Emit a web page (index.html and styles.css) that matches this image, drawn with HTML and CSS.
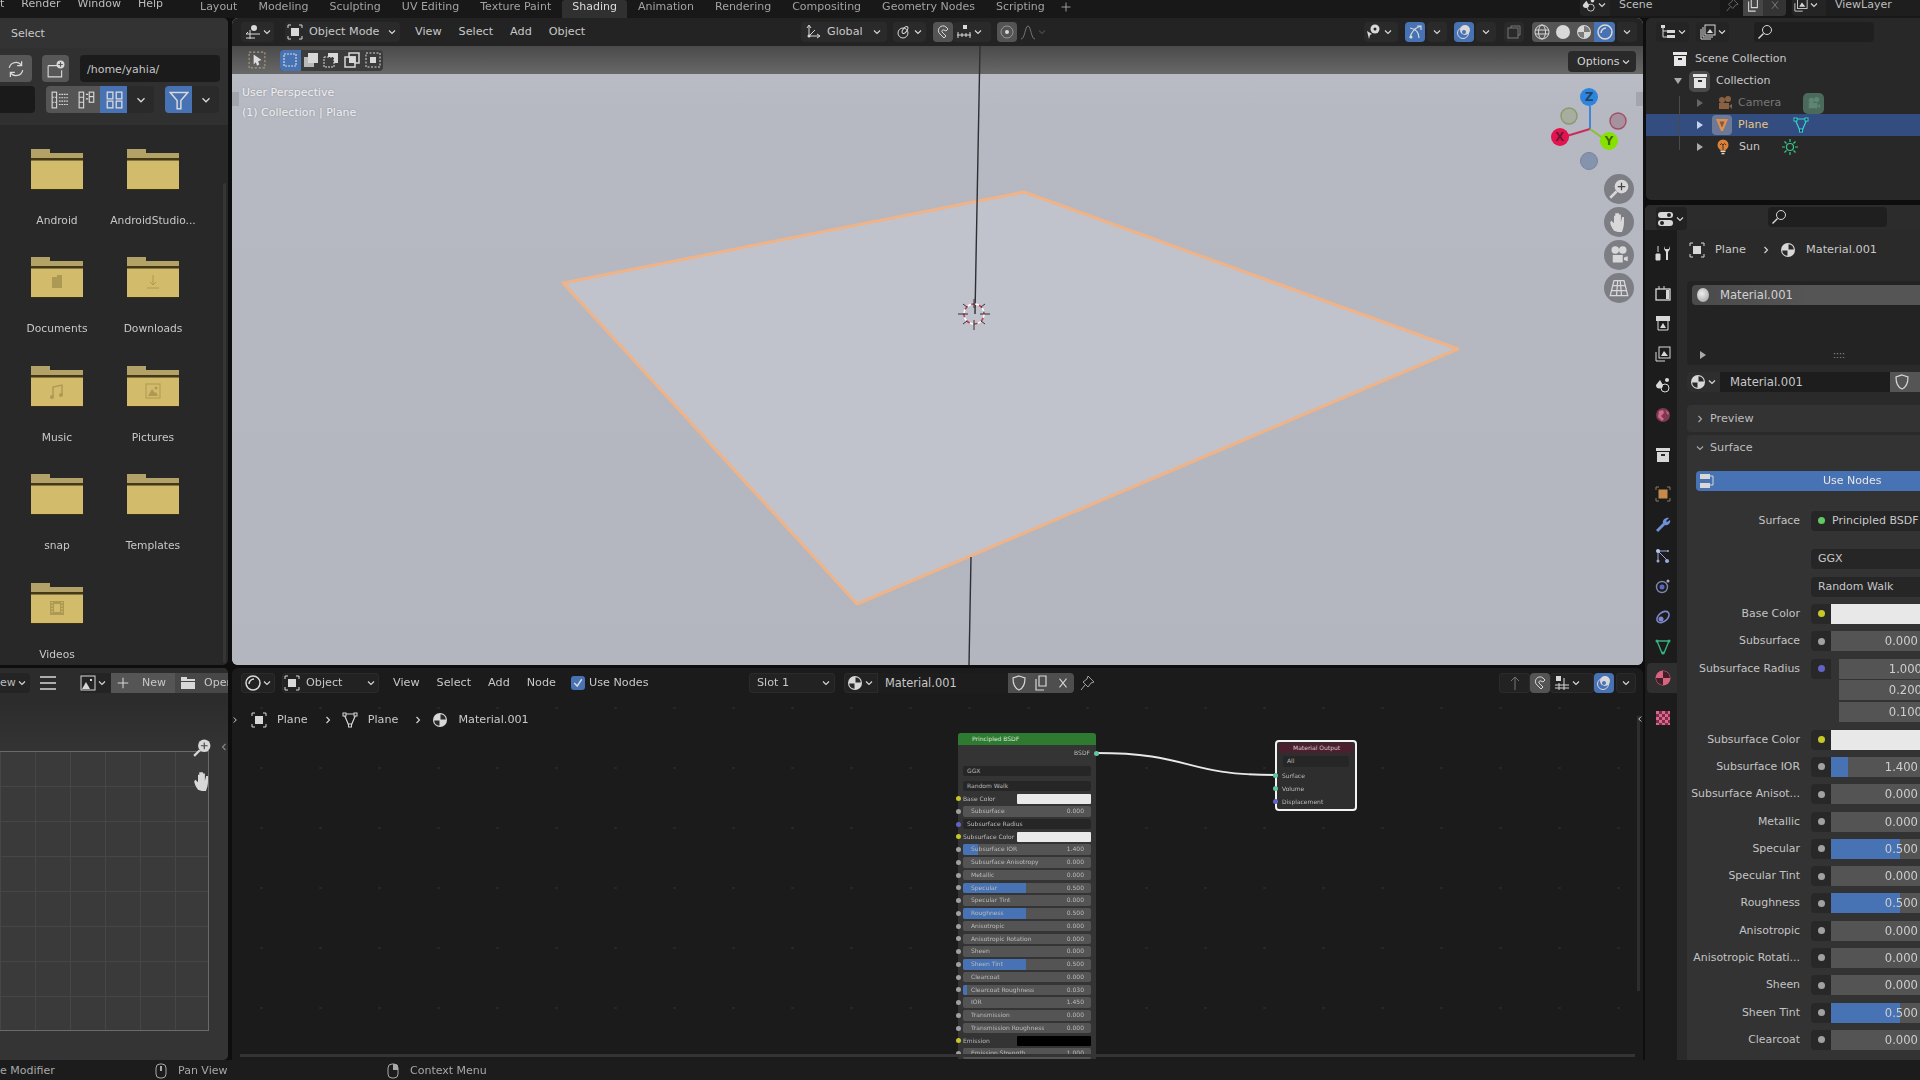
FILE: index.html
```html
<!DOCTYPE html>
<html lang="en">
<head>
<meta charset="utf-8">
<title>Blender - Shading</title>
<link rel="stylesheet" href="styles.css">
</head>
<body>
<svg class="defs" width="0" height="0">
  <symbol id="chk" viewBox="0 0 16 16"><path d="M3 8l4 4 6-9" fill="none" stroke="currentColor" stroke-width="2"/></symbol>
  <symbol id="chev" viewBox="0 0 16 16"><path d="M4 6l4 4 4-4" fill="none" stroke="currentColor" stroke-width="1.5"/></symbol>
  <symbol id="obj" viewBox="0 0 16 16"><path d="M4 1H1v3M12 1h3v3M4 15H1v-3M12 15h3v-3" fill="none" stroke="currentColor"/><rect x="4" y="4" width="8" height="8" fill="currentColor"/></symbol>
  <symbol id="ed3d" viewBox="0 0 16 16"><circle cx="9" cy="4" r="3" fill="currentColor"/><path d="M1 10h14M5 6v9M1 14h9M3 8l-2 2" fill="none" stroke="currentColor"/></symbol>
  <symbol id="axes" viewBox="0 0 16 16"><path d="M4 2v10h10M4 12l6-6M2 4l2-3 2 3M12 10l3 2-3 2" fill="none" stroke="currentColor"/><circle cx="4" cy="12" r="1.5" fill="currentColor"/></symbol>
  <symbol id="link" viewBox="0 0 16 16"><circle cx="7" cy="9" r="5" fill="none" stroke="currentColor"/><ellipse cx="9" cy="6" rx="2" ry="4" transform="rotate(35 9 6)" fill="none" stroke="currentColor"/></symbol>
  <symbol id="magnet" viewBox="0 0 16 16"><path d="M9 14l-4-4a4 4 0 0 1 6-7l2 2-2 2-2-1a1.500 1.500 0 0 0-2 2l4 4z" fill="none" stroke="currentColor"/></symbol>
  <symbol id="snap" viewBox="0 0 16 16"><rect x="7" y="1" width="4" height="4" fill="currentColor"/><path d="M1 11h14M2 8v6M6 9v4M10 9v4M14 8v6" fill="none" stroke="currentColor"/></symbol>
  <symbol id="grid" viewBox="0 0 16 16"><rect x="2" y="1" width="5" height="5" fill="currentColor"/><path d="M1 10h14M10 3v12M5 8v7M1 13h14" fill="none" stroke="currentColor"/></symbol>
  <symbol id="prop" viewBox="0 0 16 16"><circle cx="8" cy="8" r="6" fill="none" stroke="currentColor" opacity=".5"/><circle cx="8" cy="8" r="2" fill="currentColor"/></symbol>
  <symbol id="bell" viewBox="0 0 16 16"><path d="M1 15C5 15 5 2 8 2s3 13 7 13" fill="none" stroke="currentColor"/></symbol>
  <symbol id="eye" viewBox="0 0 16 16"><circle cx="9" cy="5" r="4.500" fill="currentColor"/><circle cx="9" cy="5" r="1.500" fill="#222"/><path d="M1 7l5 3-2 1-1 4z" fill="currentColor"/></symbol>
  <symbol id="gizmo" viewBox="0 0 16 16"><path d="M3 14c1-6 5-10 11-12M3 4c6 1 9 5 9 10M10 2h4v4" fill="none" stroke="currentColor" stroke-width="1.200"/><circle cx="4" cy="13" r="1.500" fill="currentColor"/></symbol>
  <symbol id="overlay" viewBox="0 0 16 16"><circle cx="7" cy="9" r="5.500" fill="none" stroke="currentColor"/><circle cx="9" cy="6" r="5" fill="currentColor"/><circle cx="8" cy="8" r="2" fill="#4772b3"/></symbol>
  <symbol id="xray" viewBox="0 0 16 16"><rect x="2" y="4" width="10" height="10" fill="none" stroke="currentColor"/><path d="M5 4V2h9v9h-2" fill="none" stroke="currentColor"/></symbol>
  <symbol id="wire" viewBox="0 0 16 16"><circle cx="8" cy="8" r="7" fill="none" stroke="currentColor"/><ellipse cx="8" cy="8" rx="3.500" ry="7" fill="none" stroke="currentColor"/><path d="M1 6h14M1 10h14" stroke="currentColor"/></symbol>
  <symbol id="solid" viewBox="0 0 16 16"><circle cx="8" cy="8" r="7" fill="currentColor"/></symbol>
  <symbol id="mat" viewBox="0 0 16 16"><circle cx="8" cy="8" r="7" fill="currentColor"/><path d="M8.500 7.500V2.200a5.800 5.800 0 0 1 5.300 5.300z" fill="#2a2a2a"/><path d="M7.500 8.500H2.200a5.800 5.800 0 0 0 5.300 5.300z" fill="#2a2a2a"/></symbol>
  <symbol id="matv" viewBox="0 0 16 16"><circle cx="8" cy="8" r="7" fill="#d6d6d6"/><path d="M8 2a6 6 0 0 1 6 6H8z" fill="#7a7a7a"/><path d="M2 8a6 6 0 0 0 6 6V8z" fill="#7a7a7a"/></symbol>
  <symbol id="rend" viewBox="0 0 16 16"><circle cx="8" cy="8" r="7" fill="none" stroke="currentColor" stroke-width="1.500"/><path d="M4 9a5 5 0 0 1 5-5" fill="none" stroke="currentColor" stroke-width="1.500"/></symbol>
  <symbol id="search" viewBox="0 0 16 16"><circle cx="10" cy="6" r="4.500" fill="none" stroke="currentColor"/><path d="M6.500 9.500L1.500 14.500" stroke="currentColor" stroke-width="1.500"/></symbol>
  <symbol id="tree" viewBox="0 0 16 16"><path d="M1 1h4v3H1zM7 6h8v3H7zM7 11h8v3H7z" fill="currentColor"/><path d="M3 4v9h4M3 7h4" fill="none" stroke="currentColor"/></symbol>
  <symbol id="stack" viewBox="0 0 16 16"><path d="M1 5v10h10M3 3v10h10" fill="none" stroke="currentColor"/><rect x="5" y="1" width="10" height="10" fill="none" stroke="currentColor"/><path d="M7 9l3-4 3 4z" fill="currentColor"/></symbol>
  <symbol id="box" viewBox="0 0 16 16"><path d="M1 1h14v3H1z" fill="currentColor"/><path d="M2 5h12v10H2z" fill="currentColor"/><rect x="6" y="7" width="4" height="2" fill="#2b2b2b"/></symbol>
  <symbol id="cam" viewBox="0 0 16 16"><circle cx="5" cy="5" r="3" fill="currentColor"/><circle cx="11" cy="4" r="3" fill="currentColor"/><rect x="2" y="8" width="10" height="6" fill="currentColor"/><path d="M12 11l3-2v5z" fill="currentColor"/></symbol>
  <symbol id="mesh" viewBox="0 0 16 16"><path d="M2 2h12L9 14H7z" fill="none" stroke="currentColor" stroke-width="1.200"/><rect x="1" y="1" width="3" height="3" fill="#222" stroke="currentColor"/><rect x="12" y="1" width="3" height="3" fill="#222" stroke="currentColor"/><rect x="6.500" y="12" width="3" height="3" fill="#222" stroke="currentColor"/></symbol>
  <symbol id="triorange" viewBox="0 0 16 16"><path d="M2 2h12L9 14H7z" fill="#e08f4f"/><path d="M5.500 4.500h5L8.300 10h-.6z" fill="#7a5a48"/></symbol>
  <symbol id="bulb" viewBox="0 0 16 16"><circle cx="8" cy="6" r="5.500" fill="currentColor"/><rect x="5.500" y="11.500" width="5" height="1.500" fill="#e5d3c0"/><rect x="6.500" y="13.800" width="3" height="1.500" fill="#e5d3c0"/><path d="M5 6l1.500-1.500L8 6l1.500-1.500L11 6M8 6v5" fill="none" stroke="#4a2f1a"/></symbol>
  <symbol id="sun" viewBox="0 0 16 16"><circle cx="8" cy="8" r="3.500" fill="none" stroke="currentColor" stroke-width="1.200"/><path d="M8 0v3M8 13v3M0 8h3M13 8h3M2.500 2.500l2 2M11.500 11.500l2 2M2.500 13.500l2-2M11.500 4.500l2-2" stroke="currentColor" stroke-width="1.200"/></symbol>
  <symbol id="toggles" viewBox="0 0 16 16"><rect x="0" y="1" width="15" height="6" rx="3" fill="currentColor"/><circle cx="11" cy="4" r="2" fill="#222"/><rect x="0" y="9" width="15" height="6" rx="3" fill="currentColor"/><circle cx="4" cy="12" r="2" fill="#222"/></symbol>
  <symbol id="tool" viewBox="0 0 16 16"><path d="M3 1v6M1 9h4v6H1z" fill="currentColor" stroke="currentColor"/><path d="M9 1v3l2 3v8h2V7l2-3V1l-1 3h-4z" fill="currentColor"/></symbol>
  <symbol id="render" viewBox="0 0 16 16"><rect x="1" y="4" width="14" height="11" fill="none" stroke="currentColor" stroke-width="1.300"/><path d="M4 1v3M9 1v3M12 6v2M12 10v2" stroke="currentColor"/><rect x="11" y="5" width="3" height="9" fill="currentColor"/></symbol>
  <symbol id="output" viewBox="0 0 16 16"><rect x="1" y="1" width="14" height="5" fill="currentColor"/><path d="M3 6v9h10V6" fill="none" stroke="currentColor"/><path d="M5 13l3-5 3 5z" fill="currentColor"/></symbol>
  <symbol id="vlayer" viewBox="0 0 16 16"><path d="M1 6v9h9" fill="none" stroke="currentColor"/><rect x="4" y="1" width="11" height="11" fill="none" stroke="currentColor"/><path d="M6 10l3-5 4 5z" fill="currentColor"/></symbol>
  <symbol id="scene" viewBox="0 0 16 16"><path d="M5 3l3 5a3.500 3.500 0 0 1-7 0z" fill="currentColor"/><circle cx="12" cy="3" r="2" fill="currentColor"/><circle cx="10" cy="11" r="4" fill="none" stroke="currentColor"/></symbol>
  <symbol id="world" viewBox="0 0 16 16"><circle cx="8" cy="8" r="7" fill="#7b3a50"/><path d="M4 4l4-1 1 3-3 3 3 3-2 2-4-4z" fill="#d06a8a"/><path d="M10 3l4 3-1 2z" fill="#d06a8a"/></symbol>
  <symbol id="objo" viewBox="0 0 16 16"><path d="M4 1H1v3M12 1h3v3M4 15H1v-3M12 15h3v-3" fill="none" stroke="#8a7a60"/><rect x="3.500" y="3.500" width="9" height="9" fill="#c48a4c"/></symbol>
  <symbol id="wrench" viewBox="0 0 16 16"><path d="M14 1l-3 3 1 1 3-2c1 3-2 6-5 5l-7 7-2-2 7-7C7 3 11 0 14 1z" fill="#6f8fd6"/></symbol>
  <symbol id="part" viewBox="0 0 16 16"><path d="M3 3l4 4M3 3v10M7 7l7 7M3 3h10" stroke="#9aa7d8" stroke-width="1"/><circle cx="3" cy="3" r="2" fill="#bac6f0"/><circle cx="3" cy="13" r="1.500" fill="#9aa7d8"/><circle cx="12" cy="13" r="2" fill="#9aa7d8"/><circle cx="13" cy="3" r="1" fill="#9aa7d8"/></symbol>
  <symbol id="phys" viewBox="0 0 16 16"><circle cx="7" cy="9" r="5.500" fill="none" stroke="#7d86ad" stroke-width="1.400"/><circle cx="7" cy="9" r="2.500" fill="#5a68c4"/><circle cx="13" cy="3" r="1.500" fill="#aab"/></symbol>
  <symbol id="cons" viewBox="0 0 16 16"><ellipse cx="8" cy="8" rx="7" ry="4.500" transform="rotate(-40 8 8)" fill="none" stroke="#7d86c9" stroke-width="1.600"/><circle cx="6" cy="10" r="2.500" fill="#7d86c9"/></symbol>
  <symbol id="datag" viewBox="0 0 16 16"><path d="M2 2h12L9 14H7z" fill="none" stroke="#35b37e" stroke-width="1.400"/><circle cx="2" cy="2" r="1.500" fill="#35b37e"/><circle cx="14" cy="2" r="1.500" fill="#35b37e"/><circle cx="8" cy="14" r="1.500" fill="#35b37e"/></symbol>
  <symbol id="matp" viewBox="0 0 16 16"><circle cx="8" cy="8" r="7.500" fill="#d8647f"/><path d="M8 1a7 7 0 0 1 7 7H8zM8 8v7a7 7 0 0 1-7-7z" fill="#431f2a"/></symbol>
  <symbol id="tex" viewBox="0 0 16 16"><rect x="1" y="1" width="14" height="14" fill="#802b48"/><path d="M1 1h3v3H1zM7 1h3v3H7zM13 1h2v3h-2zM4 4h3v3H4zM10 4h3v3h-3zM1 7h3v3H1zM7 7h3v3H7zM13 7h2v3h-2zM4 10h3v3H4zM10 10h3v3h-3zM1 13h3v2H1zM7 13h3v2H7zM13 13h2v2h-2z" fill="#d7698b"/></symbol>
  <symbol id="shield" viewBox="0 0 16 16"><path d="M8 1l6 2c0 6-1 10-6 12C3 13 2 9 2 3z" fill="none" stroke="currentColor" stroke-width="1.200"/></symbol>
  <symbol id="copy" viewBox="0 0 16 16"><path d="M3 4v11h8M6 1h7v10H6z" fill="none" stroke="currentColor" stroke-width="1.200"/></symbol>
  <symbol id="x" viewBox="0 0 16 16"><path d="M4 3l8 10M12 3L4 13" stroke="currentColor" stroke-width="1.200"/></symbol>
  <symbol id="pin" viewBox="0 0 16 16"><path d="M9 1l6 6-3 1-3 4-5-5 4-3zM6 10l-4 5" fill="none" stroke="currentColor"/></symbol>
  <symbol id="burger" viewBox="0 0 16 16"><path d="M0 2h16M0 8h16M0 14h16" stroke="currentColor" stroke-width="1.600"/></symbol>
  <symbol id="img" viewBox="0 0 16 16"><rect x="1" y="1" width="14" height="14" fill="none" stroke="currentColor"/><path d="M2 14l4-7 4 7z" fill="currentColor"/><rect x="10" y="4" width="2" height="2" fill="currentColor"/></symbol>
  <symbol id="plus" viewBox="0 0 16 16"><path d="M8 2v12M2 8h12" stroke="currentColor" stroke-width="1.200"/></symbol>
  <symbol id="folder" viewBox="0 0 16 16"><path d="M1 2h6v2h8v2H1z" fill="currentColor"/><path d="M1 7h14v7H1z" fill="currentColor"/></symbol>
  <symbol id="zoomin" viewBox="0 0 16 16"><circle cx="10" cy="6" r="5.500" fill="currentColor"/><path d="M10 3v6M7 6h6" stroke="#444"/><path d="M6 10l-5 5" stroke="currentColor" stroke-width="2"/></symbol>
  <symbol id="hand" viewBox="0 0 16 16"><path d="M4 15C2 12 1 10 1 8l1-1 2 2V3h1v4-6h1.500v6V1H8v6-5h1.500v6l1-4H12v4c0 4-1 6-2 9z" fill="currentColor"/></symbol>
  <symbol id="cam2" viewBox="0 0 16 16"><circle cx="5" cy="4" r="3" fill="currentColor"/><circle cx="11" cy="4" r="3" fill="currentColor"/><rect x="3" y="8" width="8" height="6" fill="currentColor"/><path d="M12 10l3-1v4l-3-1z" fill="currentColor"/></symbol>
  <symbol id="persp" viewBox="0 0 16 16"><path d="M4 2h8l3 12H1zM2.500 6h11M1.500 10h13M7 2l-1 12M9 2l1 12" fill="none" stroke="currentColor"/></symbol>
  <symbol id="mouse1" viewBox="0 0 16 16"><rect x="3" y="1" width="10" height="14" rx="4" fill="none" stroke="currentColor"/><rect x="7" y="3" width="2" height="5" fill="currentColor"/></symbol>
  <symbol id="mouse2" viewBox="0 0 16 16"><rect x="3" y="1" width="10" height="14" rx="4" fill="none" stroke="currentColor"/><path d="M8 1h2a3 3 0 0 1 3 3v3H8z" fill="currentColor"/></symbol>
  <symbol id="refresh" viewBox="0 0 16 16"><path d="M2 7a6 6 0 0 1 11-2M14 9a6 6 0 0 1-11 2M13 1v4H9M3 15v-4h4" fill="none" stroke="currentColor" stroke-width="1.100"/></symbol>
  <symbol id="newdir" viewBox="0 0 16 16"><path d="M1 5h8M1 5v10h12V9" fill="none" stroke="currentColor"/><circle cx="12" cy="4" r="3.500" fill="currentColor"/><path d="M12 2v4M10 4h4" stroke="#555"/></symbol>
  <symbol id="ls1" viewBox="0 0 16 16"><rect x="1" y="1" width="4" height="14" fill="none" stroke="currentColor"/><path d="M1 5.500h4M1 10h4M7 3h8M7 6h8M7 9h8M7 12h8" stroke="currentColor" stroke-dasharray="1.500 .7"/></symbol>
  <symbol id="ls2" viewBox="0 0 16 16"><rect x="1" y="1" width="4" height="14" fill="none" stroke="currentColor"/><rect x="10" y="1" width="4" height="9" fill="none" stroke="currentColor"/><path d="M1 5.500h4M1 10h4M10 5h4M7 3h2M7 7h2" stroke="currentColor"/></symbol>
  <symbol id="ls3" viewBox="0 0 16 16"><rect x="2" y="1" width="5" height="6" fill="none" stroke="currentColor" stroke-width="1.200"/><rect x="10" y="1" width="5" height="6" fill="none" stroke="currentColor" stroke-width="1.200"/><rect x="2" y="9" width="5" height="6" fill="none" stroke="currentColor" stroke-width="1.200"/><rect x="10" y="9" width="5" height="6" fill="none" stroke="currentColor" stroke-width="1.200"/></symbol>
  <symbol id="filter" viewBox="0 0 16 16"><path d="M1 2h14L9.500 8.500V15h-3V8.500z" fill="none" stroke="currentColor" stroke-width="1.200"/></symbol>
  <symbol id="cursor" viewBox="0 0 16 16"><rect x="1" y="1" width="14" height="14" fill="none" stroke="#a89878" stroke-dasharray="2 1.500"/><path d="M5 3l7 5-3 1 1 3-2 1-1-3-2 2z" fill="#ddd"/></symbol>
  <symbol id="sel1" viewBox="0 0 16 16"><rect x="2" y="2" width="12" height="12" fill="none" stroke="currentColor" stroke-width="1.200" stroke-dasharray="2 1"/></symbol>
  <symbol id="sel2" viewBox="0 0 16 16"><rect x="5" y="1" width="10" height="10" fill="currentColor"/><rect x="1" y="5" width="10" height="10" fill="currentColor" opacity=".8"/></symbol>
  <symbol id="sel3" viewBox="0 0 16 16"><path d="M5 5V1h10v10h-4V5z" fill="currentColor"/><rect x="1" y="5" width="10" height="10" fill="none" stroke="currentColor" stroke-dasharray="2 1"/></symbol>
  <symbol id="sel4" viewBox="0 0 16 16"><path d="M5 5V1h10v10h-4V5z" fill="none" stroke="currentColor" stroke-width="1.500"/><path d="M1 5h10v10H1z" fill="none" stroke="currentColor" stroke-width="1.500"/><rect x="5" y="5" width="6" height="6" fill="currentColor"/></symbol>
  <symbol id="sel5" viewBox="0 0 16 16"><rect x="1" y="1" width="14" height="14" fill="none" stroke="currentColor" stroke-dasharray="2 1.500"/><rect x="5" y="5" width="6" height="6" fill="currentColor"/></symbol>
  <symbol id="nodes" viewBox="0 0 16 16"><path d="M1 1h10v5H1zM1 10h10v5H1z" fill="currentColor"/><path d="M11 3h3v9h-3" fill="none" stroke="currentColor"/></symbol>
  <symbol id="up" viewBox="0 0 16 16"><path d="M8 15V2M4 6l4-4 4 4" fill="none" stroke="currentColor"/></symbol>
  <symbol id="fmusic" viewBox="0 0 16 16"><path d="M4 14V4l9-2v10" fill="none" stroke="currentColor" stroke-width="1.400"/><circle cx="3" cy="14" r="2" fill="currentColor"/><circle cx="12" cy="12" r="2" fill="currentColor"/></symbol>
  <symbol id="fpic" viewBox="0 0 16 16"><rect x="1" y="1" width="14" height="14" fill="none" stroke="currentColor"/><path d="M3 13l4-7 3 4 1-1 2 4z" fill="currentColor"/><circle cx="11" cy="5" r="1.500" fill="currentColor"/></symbol>
  <symbol id="fdoc" viewBox="0 0 16 16"><path d="M3 3h5v11H3zM8 1h5v13H8z" fill="currentColor"/></symbol>
  <symbol id="fdown" viewBox="0 0 16 16"><path d="M8 1v10M5 8l3 3 3-3M2 14h12" fill="none" stroke="currentColor"/></symbol>
  <symbol id="fvid" viewBox="0 0 16 16"><path d="M1 1h14v14H1z" fill="currentColor"/><path d="M3 2v12M13 2v12" stroke="#d2bb6b" stroke-dasharray="1.500 1.500" stroke-width="1.500"/><rect x="5" y="4" width="6" height="8" fill="#d2bb6b"/></symbol>
  <symbol id="dir" viewBox="0 0 52 41" preserveAspectRatio="none"><path d="M0 0h19v5H0z" fill="#b3a268"/><path d="M0 4h52v6H0z" fill="#b3a268"/><path d="M0 9h52v2.500H0z" fill="#453814"/><path d="M0 11.500h52V40H0z" fill="#d2bb6b"/><path d="M0 40h52v1H0z" fill="#3b3112"/></symbol>
</svg>

<div class="app">
  <header class="topbar">
    <nav class="topmenu"><span>t</span><span>Render</span><span>Window</span><span>Help</span></nav>
    <nav class="tabs">
      <span>Layout</span><span>Modeling</span><span>Sculpting</span><span>UV Editing</span><span>Texture Paint</span><span class="on">Shading</span><span>Animation</span><span>Rendering</span><span>Compositing</span><span>Geometry Nodes</span><span>Scripting</span>
      <svg class="ic i12 tabplus"><use href="#plus"/></svg>
    </nav>
    <div class="scene-group">
      <span class="sg-btn"><svg class="ic i14"><use href="#scene"/></svg><svg class="ic i12"><use href="#chev"/></svg></span>
      <span class="sg-name">Scene</span>
      <svg class="ic i14 dim"><use href="#pin"/></svg>
      <span class="sg-copy"><svg class="ic i14"><use href="#copy"/></svg></span>
      <span class="sg-x"><svg class="ic i12 dim"><use href="#x"/></svg></span>
      <span class="sg-btn sg-vl"><svg class="ic i14"><use href="#vlayer"/></svg><svg class="ic i12"><use href="#chev"/></svg></span>
      <span class="sg-name sg-vlname">ViewLayer</span>
    </div>
  </header>

  <main class="workspace">
    <aside class="col-left">
      <section class="filebrowser">
        <div class="fb-head">Select</div>
        <div class="fb-tools">
          <div class="fb-row">
            <span class="fb-btn fb-ref"><svg class="ic i18"><use href="#refresh"/></svg></span>
            <span class="fb-btn fb-new"><svg class="ic i18"><use href="#newdir"/></svg></span>
            <span class="fb-path">/home/yahia/</span>
          </div>
          <div class="fb-row">
            <span class="fb-input"></span>
            <span class="fb-mode"><svg class="ic i18"><use href="#ls1"/></svg></span>
            <span class="fb-mode"><svg class="ic i18"><use href="#ls2"/></svg></span>
            <span class="fb-mode blue"><svg class="ic i18"><use href="#ls3"/></svg></span>
            <span class="fb-chev"><svg class="ic i14"><use href="#chev"/></svg></span>
            <span class="fb-mode blue fb-filter"><svg class="ic i20"><use href="#filter"/></svg></span>
            <span class="fb-chev"><svg class="ic i14"><use href="#chev"/></svg></span>
          </div>
        </div>
        <div class="fb-grid">
          <div class="dirc"><div class="dirico"><svg class="dirsvg"><use href="#dir"/></svg></div><span>Android</span></div>
          <div class="dirc"><div class="dirico"><svg class="dirsvg"><use href="#dir"/></svg></div><span>AndroidStudio...</span></div>
          <div class="dirc"><div class="dirico"><svg class="dirsvg"><use href="#dir"/></svg><svg class="dirin"><use href="#fdoc"/></svg></div><span>Documents</span></div>
          <div class="dirc"><div class="dirico"><svg class="dirsvg"><use href="#dir"/></svg><svg class="dirin"><use href="#fdown"/></svg></div><span>Downloads</span></div>
          <div class="dirc"><div class="dirico"><svg class="dirsvg"><use href="#dir"/></svg><svg class="dirin"><use href="#fmusic"/></svg></div><span>Music</span></div>
          <div class="dirc"><div class="dirico"><svg class="dirsvg"><use href="#dir"/></svg><svg class="dirin"><use href="#fpic"/></svg></div><span>Pictures</span></div>
          <div class="dirc"><div class="dirico"><svg class="dirsvg"><use href="#dir"/></svg></div><span>snap</span></div>
          <div class="dirc"><div class="dirico"><svg class="dirsvg"><use href="#dir"/></svg></div><span>Templates</span></div>
          <div class="dirc"><div class="dirico"><svg class="dirsvg"><use href="#dir"/></svg><svg class="dirin"><use href="#fvid"/></svg></div><span>Videos</span></div>
        </div>
        <i class="fb-scroll"></i>
      </section>
      <section class="imgeditor">
        <div class="ie-head">
          <span class="ie-view">ew<svg class="ic i12"><use href="#chev"/></svg></span>
          <svg class="ic i16 ie-burger"><use href="#burger"/></svg>
          <span class="ie-type"><svg class="ic i16"><use href="#img"/></svg><svg class="ic i12"><use href="#chev"/></svg></span>
          <span class="ie-new"><svg class="ic i14"><use href="#plus"/></svg><span>New</span></span>
          <span class="ie-open"><svg class="ic i16"><use href="#folder"/></svg><span>Open</span></span>
        </div>
        <div class="ie-body">
          <div class="ie-canvas"></div>
          <div class="ie-nav">
            <svg class="ic i18"><use href="#zoomin"/></svg>
            <svg class="ic i20"><use href="#hand"/></svg>
          </div>
          <svg class="ic i12 ie-arrow"><use href="#chev"/></svg>
        </div>
      </section>
    </aside>

    <div class="col-mid">
      <section class="viewport">
        <div class="hdr">
          <span class="w w-ed"><svg class="ic i16"><use href="#ed3d"/></svg><svg class="ic i12"><use href="#chev"/></svg></span>
          <span class="w w-mode"><svg class="ic i16"><use href="#obj"/></svg><span class="w-lab">Object Mode</span><svg class="ic i12 w-end"><use href="#chev"/></svg></span>
          <nav class="menus m1"><span>View</span><span>Select</span><span>Add</span><span>Object</span></nav>
          <span class="w w-global"><svg class="ic i16"><use href="#axes"/></svg><span class="w-lab">Global</span><svg class="ic i12 w-end"><use href="#chev"/></svg></span>
          <span class="w w-link"><svg class="ic i16"><use href="#link"/></svg><svg class="ic i12"><use href="#chev"/></svg></span>
          <span class="w w-ico grey"><svg class="ic i16"><use href="#magnet"/></svg></span>
          <span class="w w-snap"><svg class="ic i16"><use href="#snap"/></svg><svg class="ic i12"><use href="#chev"/></svg></span>
          <span class="w w-ico grey w-prop"><svg class="ic i16"><use href="#prop"/></svg></span>
          <span class="w-fall"><svg class="ic i16 dim"><use href="#bell"/></svg><svg class="ic i12 dim2"><use href="#chev"/></svg></span>
          <div class="hdr-right">
            <span class="w w-vis"><svg class="ic i16"><use href="#eye"/></svg><svg class="ic i12"><use href="#chev"/></svg></span>
            <span class="w w-ico blue"><svg class="ic i16"><use href="#gizmo"/></svg></span>
            <span class="w w-ch"><svg class="ic i12"><use href="#chev"/></svg></span>
            <span class="w w-ico blue"><svg class="ic i16"><use href="#overlay"/></svg></span>
            <span class="w w-ch"><svg class="ic i12"><use href="#chev"/></svg></span>
            <span class="w w-ico dimw"><svg class="ic i16 dim"><use href="#xray"/></svg></span>
            <span class="shade">
              <span class="w-ico"><svg class="ic i16"><use href="#wire"/></svg></span>
              <span class="w-ico"><svg class="ic i16"><use href="#solid"/></svg></span>
              <span class="w-ico"><svg class="ic i16"><use href="#matv"/></svg></span>
              <span class="w-ico blue"><svg class="ic i16"><use href="#rend"/></svg></span>
            </span>
            <span class="w w-ch"><svg class="ic i12"><use href="#chev"/></svg></span>
          </div>
        </div>
        <div class="toolhdr">
          <span class="th-cur"><svg class="ic i18"><use href="#cursor"/></svg></span>
          <span class="th-sel">
            <span class="on"><svg class="ic i16"><use href="#sel1"/></svg></span>
            <span><svg class="ic i16"><use href="#sel2"/></svg></span>
            <span><svg class="ic i16"><use href="#sel3"/></svg></span>
            <span><svg class="ic i16"><use href="#sel4"/></svg></span>
            <span><svg class="ic i16"><use href="#sel5"/></svg></span>
          </span>
          <span class="th-opt">Options<svg class="ic i12"><use href="#chev"/></svg></span>
        </div>
        <div class="vp-body">
          <p class="vp-text">User Perspective<br>(1) Collection | Plane</p>
          <div class="vp-nav">
            <span><svg class="ic i20"><use href="#zoomin"/></svg></span>
            <span><svg class="ic i20"><use href="#hand"/></svg></span>
            <span><svg class="ic i20"><use href="#cam2"/></svg></span>
            <span><svg class="ic i20"><use href="#persp"/></svg></span>
          </div>
          <i class="vp-tab vp-tab-l"></i><i class="vp-tab vp-tab-r"></i>
        </div>
        <svg class="vp-scene" viewBox="0 0 1411 647">
          <polygon points="331,265 792,174 1226,331 625,586" fill="#c0c3cc" stroke="#efb387" stroke-width="3" stroke-linejoin="round"/>
          <path d="M748 28L743 296" stroke="#2d2f33" stroke-width="1.400"/>
          <path d="M739 539L737 647" stroke="#2d2f33" stroke-width="1.400"/>
          <g fill="none">
            <circle cx="742" cy="296" r="10" stroke="#fff" stroke-width="1.600" stroke-dasharray="4 4"/>
            <circle cx="742" cy="296" r="10" stroke="#c0405a" stroke-width="1.600" stroke-dasharray="4 4" stroke-dashoffset="4"/>
            <path d="M742 281v9M742 302v10M726 296h10M748 296h10M731 286l4 3M749 303l4 3M731 306l4-3M749 289l4-3" stroke="#333" stroke-width="1"/>
          </g>
          <g>
            <path d="M1358 111V88" stroke="#3f86d8" stroke-width="2"/>
            <path d="M1358 111l-30 9" stroke="#cc2a5e" stroke-width="2"/>
            <path d="M1358 111l17 12" stroke="#89c22d" stroke-width="2"/>
            <circle cx="1337" cy="98" r="8" fill="#a7ae9f" stroke="#879a6b" stroke-width="1.400"/>
            <circle cx="1386" cy="103" r="8" fill="#a6929e" stroke="#a24e68" stroke-width="1.400"/>
            <circle cx="1357" cy="143" r="8.500" fill="#8593ac" stroke="#74859f" stroke-width="1"/>
            <circle cx="1357" cy="79" r="9" fill="#2e85de"/>
            <circle cx="1328" cy="119" r="9" fill="#e3134f"/>
            <circle cx="1377" cy="123" r="9" fill="#84e100"/>
            <text class="giz" x="1357" y="83">Z</text>
            <text class="giz" x="1328" y="123">X</text>
            <text class="giz" x="1377" y="127">Y</text>
          </g>
        </svg>
      </section>

      <section class="nodeeditor">
        <div class="hdr nhdr">
          <span class="w w-ed2"><svg class="ic i16"><use href="#rend"/></svg><svg class="ic i12"><use href="#chev"/></svg></span>
          <span class="w w-objm"><svg class="ic i16"><use href="#obj"/></svg><span class="w-lab">Object</span><svg class="ic i12 w-end"><use href="#chev"/></svg></span>
          <nav class="menus m2"><span>View</span><span>Select</span><span>Add</span><span>Node</span></nav>
          <span class="chk"><svg class="ic i12"><use href="#chk"/></svg></span>
          <span class="chk-lab">Use Nodes</span>
          <span class="w w-slot"><span>Slot 1</span><svg class="ic i12 w-end"><use href="#chev"/></svg></span>
          <span class="w w-mic"><svg class="ic i16"><use href="#mat"/></svg><svg class="ic i12"><use href="#chev"/></svg></span>
          <span class="w-mname">Material.001</span>
          <span class="w-act"><svg class="ic i16"><use href="#shield"/></svg></span>
          <span class="w-act"><svg class="ic i16"><use href="#copy"/></svg></span>
          <span class="w-act w-actx"><svg class="ic i14"><use href="#x"/></svg></span>
          <svg class="ic i16 nh-pin"><use href="#pin"/></svg>
          <div class="hdr-right nh-right">
            <span class="w w-ico nh-up"><svg class="ic i16 dim"><use href="#up"/></svg></span>
            <span class="w w-ico grey"><svg class="ic i16"><use href="#magnet"/></svg></span>
            <span class="w w-snap2"><svg class="ic i16"><use href="#grid"/></svg><svg class="ic i12"><use href="#chev"/></svg></span>
            <span class="w w-ico blue"><svg class="ic i16"><use href="#overlay"/></svg></span>
            <span class="w w-ch"><svg class="ic i12"><use href="#chev"/></svg></span>
          </div>
        </div>
        <div class="crumb">
          <svg class="ic i10 c-first"><use href="#chev"/></svg>
          <svg class="ic i16"><use href="#obj"/></svg><span class="c-txt">Plane</span>
          <svg class="ic i12 c-sep"><use href="#chev"/></svg>
          <svg class="ic i16"><use href="#mesh"/></svg><span class="c-txt">Plane</span>
          <svg class="ic i12 c-sep"><use href="#chev"/></svg>
          <svg class="ic i16"><use href="#mat"/></svg><span class="c-txt">Material.001</span>
        </div>

        <svg class="wire-svg" viewBox="0 0 1411 392"><path d="M864 85C960 85 950 107 1043 107" fill="none" stroke="#e8e8e8" stroke-width="1.800"/></svg>

        <article class="node bsdf">
          <div class="n-title">Principled BSDF</div>
          <div class="n-out">BSDF<i class="sk g out"></i></div>
          <div class="n-dd">GGX</div>
          <div class="n-dd">Random Walk</div>
          <div class="nr"><i class="sk y"></i><span class="n-cl">Base Color</span><b class="sw"></b></div>
          <div class="nr"><i class="sk"></i><span class="nf"><span>Subsurface</span><span>0.000</span></span></div>
          <div class="nr"><i class="sk p"></i><span class="nf dark"><span>Subsurface Radius</span></span></div>
          <div class="nr"><i class="sk y"></i><span class="n-cl">Subsurface Color</span><b class="sw"></b></div>
          <div class="nr"><i class="sk"></i><span class="nf"><u style="width:12%"></u><span>Subsurface IOR</span><span>1.400</span></span></div>
          <div class="nr"><i class="sk"></i><span class="nf"><span>Subsurface Anisotropy</span><span>0.000</span></span></div>
          <div class="nr"><i class="sk"></i><span class="nf"><span>Metallic</span><span>0.000</span></span></div>
          <div class="nr"><i class="sk"></i><span class="nf"><u style="width:49%"></u><span>Specular</span><span>0.500</span></span></div>
          <div class="nr"><i class="sk"></i><span class="nf"><span>Specular Tint</span><span>0.000</span></span></div>
          <div class="nr"><i class="sk"></i><span class="nf"><u style="width:49%"></u><span>Roughness</span><span>0.500</span></span></div>
          <div class="nr"><i class="sk"></i><span class="nf"><span>Anisotropic</span><span>0.000</span></span></div>
          <div class="nr"><i class="sk"></i><span class="nf"><span>Anisotropic Rotation</span><span>0.000</span></span></div>
          <div class="nr"><i class="sk"></i><span class="nf"><span>Sheen</span><span>0.000</span></span></div>
          <div class="nr"><i class="sk"></i><span class="nf"><u style="width:49%"></u><span>Sheen Tint</span><span>0.500</span></span></div>
          <div class="nr"><i class="sk"></i><span class="nf"><span>Clearcoat</span><span>0.000</span></span></div>
          <div class="nr"><i class="sk"></i><span class="nf"><u style="width:3%"></u><span>Clearcoat Roughness</span><span>0.030</span></span></div>
          <div class="nr"><i class="sk"></i><span class="nf"><span>IOR</span><span>1.450</span></span></div>
          <div class="nr"><i class="sk"></i><span class="nf"><span>Transmission</span><span>0.000</span></span></div>
          <div class="nr"><i class="sk"></i><span class="nf"><span>Transmission Roughness</span><span>0.000</span></span></div>
          <div class="nr"><i class="sk y"></i><span class="n-cl">Emission</span><b class="sw blk"></b></div>
          <div class="nr"><i class="sk"></i><span class="nf"><span>Emission Strength</span><span>1.000</span></span></div>
        </article>

        <article class="node output">
          <div class="n-title red">Material Output</div>
          <div class="n-dd o-dd">All</div>
          <div class="o-s"><i class="sk g"></i>Surface</div>
          <div class="o-s"><i class="sk g"></i>Volume</div>
          <div class="o-s"><i class="sk p"></i>Displacement</div>
        </article>

        <i class="ne-hs"></i><i class="ne-vs"></i>
        <svg class="ic i10 ne-arrow"><use href="#chev"/></svg>
      </section>
    </div>

    <aside class="col-right">
      <section class="outliner">
        <div class="ol-head">
          <span class="w w-ed"><svg class="ic i16"><use href="#tree"/></svg><svg class="ic i12"><use href="#chev"/></svg></span>
          <span class="w w-ed"><svg class="ic i16"><use href="#stack"/></svg><svg class="ic i12"><use href="#chev"/></svg></span>
          <span class="search ol-search"><svg class="ic i16"><use href="#search"/></svg></span>
        </div>
        <div class="ol-row l0"><svg class="ic i16"><use href="#box"/></svg><span>Scene Collection</span></div>
        <div class="ol-row l1"><b class="tri down"></b><span class="ol-hl"><svg class="ic i16"><use href="#box"/></svg></span><span>Collection</span></div>
        <div class="ol-row l2 off"><b class="tri"></b><svg class="ic i16 c-cam"><use href="#cam"/></svg><span>Camera</span><span class="ol-x"><svg class="ic i14"><use href="#cam"/></svg></span></div>
        <div class="ol-row l2 sel"><b class="tri"></b><span class="ol-hl2"><svg class="ic i16"><use href="#triorange"/></svg></span><span class="sel-txt">Plane</span><svg class="ic i16 c-mesh"><use href="#mesh"/></svg></div>
        <div class="ol-row l2"><b class="tri"></b><svg class="ic i16 c-bulb"><use href="#bulb"/></svg><span>Sun</span><svg class="ic i16 c-sun"><use href="#sun"/></svg></div>
        <i class="ol-line"></i>
      </section>

      <section class="props">
        <div class="pr-head">
          <span class="w w-ed3"><svg class="ic i16"><use href="#toggles"/></svg><svg class="ic i12"><use href="#chev"/></svg></span>
          <span class="search pr-search"><svg class="ic i16"><use href="#search"/></svg></span>
        </div>
        <div class="pr-main">
          <div class="pr-tabs">
            <span class="tab"><svg class="ic i16"><use href="#tool"/></svg></span>
            <span class="tab sep"><svg class="ic i16"><use href="#render"/></svg></span>
            <span class="tab"><svg class="ic i16"><use href="#output"/></svg></span>
            <span class="tab"><svg class="ic i16"><use href="#vlayer"/></svg></span>
            <span class="tab"><svg class="ic i16"><use href="#scene"/></svg></span>
            <span class="tab"><svg class="ic i16"><use href="#world"/></svg></span>
            <span class="tab sep"><svg class="ic i16"><use href="#box"/></svg></span>
            <span class="tab sep"><svg class="ic i16"><use href="#objo"/></svg></span>
            <span class="tab"><svg class="ic i16"><use href="#wrench"/></svg></span>
            <span class="tab"><svg class="ic i16"><use href="#part"/></svg></span>
            <span class="tab"><svg class="ic i16"><use href="#phys"/></svg></span>
            <span class="tab"><svg class="ic i16"><use href="#cons"/></svg></span>
            <span class="tab"><svg class="ic i16"><use href="#datag"/></svg></span>
            <span class="tab act"><svg class="ic i16"><use href="#matp"/></svg></span>
            <span class="tab sep"><svg class="ic i16"><use href="#tex"/></svg></span>
          </div>
          <div class="pr-body">
            <div class="pr-crumb">
              <svg class="ic i16"><use href="#obj"/></svg><span class="pc-a">Plane</span>
              <svg class="ic i12 pc-sep"><use href="#chev"/></svg>
              <svg class="ic i16"><use href="#mat"/></svg><span class="pc-b">Material.001</span>
            </div>
            <div class="slotbox">
              <div class="slot-item"><i class="ball"></i><span>Material.001</span></div>
              <div class="slot-foot"><b class="tri small"></b><span class="dots">::::</span></div>
            </div>
            <div class="matsel">
              <span class="ms-ic"><svg class="ic i16"><use href="#mat"/></svg><svg class="ic i12"><use href="#chev"/></svg></span>
              <span class="ms-name">Material.001</span>
              <span class="ms-sh"><svg class="ic i16"><use href="#shield"/></svg></span>
              <span class="ms-sh"><svg class="ic i16"><use href="#copy"/></svg></span>
            </div>
            <div class="pn pn-prev"><svg class="ic i12 pn-r"><use href="#chev"/></svg><span>Preview</span></div>
            <div class="pn-surface">
              <div class="pn pn-h"><svg class="ic i12"><use href="#chev"/></svg><span>Surface</span></div>
              <div class="usenodes"><svg class="ic i16"><use href="#nodes"/></svg><span>Use Nodes</span></div>
              <div class="prow first"><label>Surface</label><span class="dd wide"><i class="dot g"></i>Principled BSDF</span></div>
              <div class="prow gap"><label></label><span class="dd wide">GGX</span></div>
              <div class="prow"><label></label><span class="dd wide">Random Walk</span></div>
              <div class="prow"><label>Base Color</label><span class="sock"><i class="dot y"></i></span><span class="swatch"></span></div>
              <div class="prow"><label>Subsurface</label><span class="sock"><i class="dot"></i></span><span class="num"><span>0.000</span></span></div>
              <div class="prow tri3"><label>Subsurface Radius</label><span class="sock"><i class="dot p"></i></span>
                <span class="stack"><span class="num"><span>1.000</span></span><span class="num"><span>0.200</span></span><span class="num"><span>0.100</span></span></span></div>
              <div class="prow"><label>Subsurface Color</label><span class="sock"><i class="dot y"></i></span><span class="swatch"></span></div>
              <div class="prow"><label>Subsurface IOR</label><span class="sock"><i class="dot"></i></span><span class="num"><u style="width:19%"></u><span>1.400</span></span></div>
              <div class="prow"><label>Subsurface Anisot...</label><span class="sock"><i class="dot"></i></span><span class="num"><span>0.000</span></span></div>
              <div class="prow"><label>Metallic</label><span class="sock"><i class="dot"></i></span><span class="num"><span>0.000</span></span></div>
              <div class="prow"><label>Specular</label><span class="sock"><i class="dot"></i></span><span class="num"><u style="width:76%"></u><span>0.500</span></span></div>
              <div class="prow"><label>Specular Tint</label><span class="sock"><i class="dot"></i></span><span class="num"><span>0.000</span></span></div>
              <div class="prow"><label>Roughness</label><span class="sock"><i class="dot"></i></span><span class="num"><u style="width:76%"></u><span>0.500</span></span></div>
              <div class="prow"><label>Anisotropic</label><span class="sock"><i class="dot"></i></span><span class="num"><span>0.000</span></span></div>
              <div class="prow"><label>Anisotropic Rotati...</label><span class="sock"><i class="dot"></i></span><span class="num"><span>0.000</span></span></div>
              <div class="prow"><label>Sheen</label><span class="sock"><i class="dot"></i></span><span class="num"><span>0.000</span></span></div>
              <div class="prow"><label>Sheen Tint</label><span class="sock"><i class="dot"></i></span><span class="num"><u style="width:76%"></u><span>0.500</span></span></div>
              <div class="prow"><label>Clearcoat</label><span class="sock"><i class="dot"></i></span><span class="num"><span>0.000</span></span></div>
            </div>
          </div>
        </div>
      </section>
    </aside>
  </main>

  <footer class="status">
    <span class="st-a">e Modifier</span>
    <svg class="ic i16 st-i"><use href="#mouse1"/></svg><span class="st-b">Pan View</span>
    <svg class="ic i16 st-i"><use href="#mouse2"/></svg><span>Context Menu</span>
  </footer>
</div>
</body>
</html>
```

FILE: styles.css
```css
* { box-sizing: border-box; }
html, body { margin: 0; height: 100%; }
body {
  width: 1920px; height: 1080px; overflow: hidden;
  background: #0e0e0e; color: #c9c9c9;
  font: 11px/16px "DejaVu Sans", "Noto Sans", sans-serif;
}
.defs { position: absolute; }
.ic { display: block; flex: none; color: #d8d8d8; }
.i10 { width: 10px; height: 10px; } .i12 { width: 12px; height: 12px; }
.i14 { width: 14px; height: 14px; } .i16 { width: 16px; height: 16px; }
.i18 { width: 18px; height: 18px; } .i20 { width: 20px; height: 20px; }
.dim { opacity: .45; } .dim2 { opacity: .2; }
.app { display: grid; grid-template-rows: 18px 1042px 20px; height: 1080px; filter: blur(.3px); }

/* top bar */
.topbar { display: flex; background: #181818; overflow: hidden; color: #bdbdbd; position: relative; }
.topmenu { display: flex; gap: 17px; width: 190px; margin-top: -4px; }
.tabs { display: flex; gap: 1px; align-items: stretch; color: #a2a2a2; line-height: 14px; }
.tabs > span { padding: 0 10px; }
.tabs > span.on { background: #303030; color: #dcdcdc; border-radius: 3px 3px 0 0; }
.tabplus { margin: 1px 0 0 4px; color: #aaa; }
.scene-group { position: absolute; left: 1580px; top: -6px; height: 22px; width: 340px; display: flex; align-items: center; }
.sg-btn { display: flex; align-items: center; width: 30px; height: 22px; background: #242424; border-radius: 4px 0 0 4px; padding-left: 2px; }
.sg-name { width: 110px; height: 22px; background: #1e1e1e; padding: 3px 9px; }
.scene-group > .dim { margin-left: 5px; }
.sg-copy { width: 20px; height: 22px; background: #464646; margin-left: 4px; display: flex; align-items: center; justify-content: center; }
.sg-x { width: 23px; height: 22px; background: #343434; border-radius: 0 4px 4px 0; display: flex; align-items: center; justify-content: center; }
.sg-vl { margin-left: 6px; width: 34px; }
.sg-vlname { flex: 1; }

/* columns */
.workspace { display: grid; grid-template-columns: 228px 1411px 275px; gap: 0 4px; height: 1042px; }
.col-left, .col-mid, .col-right { display: flex; flex-direction: column; min-width: 0; }
.col-left, .col-mid { gap: 3px; }
.col-right { gap: 5px; margin-left: -2px; }

/* file browser */
.filebrowser { height: 647px; background: #282828; border-radius: 0 5px 5px 0; display: flex; flex-direction: column; position: relative; overflow: hidden; }
.fb-head { flex: none; height: 30px; background: #333; padding: 8px 11px 6px; color: #c8c8c8; }
.fb-tools { flex: none; height: 77px; background: #303030; padding-top: 7px; display: flex; flex-direction: column; gap: 4px; }
.fb-row { display: flex; height: 27px; align-items: stretch; flex: none; }
.fb-btn { background: #575757; display: flex; align-items: center; justify-content: center; border-radius: 4px; }
.fb-ref { width: 32px; border-radius: 0 4px 4px 0; }
.fb-new { width: 27px; margin-left: 10px; }
.fb-path { width: 140px; margin-left: 11px; background: #1b1b1b; border-radius: 4px; padding: 7px 7px 4px; color: #c5c5c5; }
.fb-input { width: 35px; background: #1a1a1a; border-radius: 0 4px 4px 0; }
.fb-mode { width: 27px; background: #555; display: flex; align-items: center; justify-content: center; }
.fb-mode:nth-child(2) { margin-left: 11px; border-radius: 4px 0 0 4px; }
.fb-mode.blue { background: #4772b3; }
.fb-chev { width: 27px; background: #2a2a2a; border-radius: 0 4px 4px 0; display: flex; align-items: center; justify-content: center; }
.fb-filter { margin-left: 11px; border-radius: 4px 0 0 4px; }
.fb-grid { flex: 1; min-height: 0; display: grid; grid-template-columns: 96px 96px; grid-auto-rows: 108.4px; padding: 24px 0 0 9px; }
.dirc { display: flex; flex-direction: column; align-items: center; font-size: 10.7px; color: #c8c8c8; }
.dirico { width: 52px; height: 41px; position: relative; }
.dirsvg { width: 52px; height: 41px; display: block; }
.dirin { position: absolute; left: 18px; top: 17px; width: 16px; height: 16px; color: #ac9953; }
.dirc > span { margin-top: 23px; white-space: nowrap; }
.fb-scroll { position: absolute; right: 2px; top: 165px; width: 3px; height: 480px; background: #363636; border-radius: 2px; }

/* image editor */
.imgeditor { height: 392px; background: #303030; border-radius: 0 5px 5px 0; display: flex; flex-direction: column; overflow: hidden; }
.ie-head { height: 32px; padding-top: 5px; display: flex; align-items: flex-start; background: #2c2c2c; flex: none; }
.ie-view { width: 30px; height: 20px; background: #242424; border-radius: 0 4px 4px 0; display: flex; align-items: center; color: #bbb; }
.ie-burger { margin: 2px 0 0 10px; }
.ie-type { margin-left: 24px; width: 31px; height: 20px; background: #242424; border-radius: 4px 0 0 4px; display: flex; align-items: center; }
.ie-new { width: 64px; height: 20px; background: #555; display: flex; align-items: center; gap: 12px; padding-left: 5px; color: #c8c8c8; }
.ie-open { flex: 1; height: 20px; background: #474747; display: flex; align-items: center; gap: 8px; padding-left: 5px; overflow: hidden; color: #c8c8c8; white-space: nowrap; }
.ie-body { flex: 1; position: relative; background: linear-gradient(#2c2c2c, #343434 15%); }
.ie-canvas { position: absolute; left: -1px; top: 51px; width: 210px; height: 280px; border: 1px solid #6a6a6a;
  background-color: #3a3a3a;
  background-image: linear-gradient(#464646 1px, transparent 1px), linear-gradient(90deg, #464646 1px, transparent 1px);
  background-size: 35px 35px; background-position: 0 34px; }
.ie-nav { position: absolute; left: 193px; top: 39px; display: flex; flex-direction: column; gap: 14px; }
.ie-arrow { position: absolute; left: 218px; top: 41px; transform: rotate(90deg); opacity: .5; }

/* 3d viewport */
.viewport { height: 647px; position: relative; border-radius: 6px; overflow: hidden; display: flex; flex-direction: column; background: #b6b9c2; }
.hdr { height: 28px; background: #232323; display: flex; align-items: center; padding: 0 0 0 9px; color: #c8c8c8; position: relative; flex: none; font-size: 11.200px; }
.w { height: 20px; border-radius: 4px; background: #2a2a2a; display: flex; align-items: center; flex: none; }
.w.grey { background: #545454; } .w.blue, .w-ico.blue { background: #4772b3; }
.w-ico { width: 20px; height: 20px; display: flex; align-items: center; justify-content: center; }
.w-ed { width: 33px; padding-left: 4px; }
.w-mode { width: 115px; margin-left: 11px; padding: 0 2px; }
.w-lab { margin-left: 6px; }
.w-end { margin-left: auto; }
.menus { display: flex; gap: 17px; flex: none; }
.m1 { margin-left: 15px; width: 172px; }
.w-global { width: 86px; margin-left: 214px; padding: 0 4px; }
.w-link { width: 33px; margin-left: 6px; padding-left: 3px; }
.w-link + .w-ico { margin-left: 7px; }
.w-snap { width: 38px; padding-left: 3px; }
.w-prop { margin-left: 6px; }
.w-fall { display: flex; align-items: center; margin-left: 3px; }
.hdr-right { display: flex; align-items: center; position: absolute; left: 1132px; top: 4px; }
.w-vis { width: 34px; padding-left: 2px; }
.w-vis + .w-ico { margin-left: 7px; }
.w-ch { width: 20px; justify-content: center; margin-left: 2px; }
.w-ch + .w-ico { margin-left: 7px; }
.dimw { margin-left: 8px !important; background: #2a2a2a; border-radius: 4px; }
.shade { display: flex; margin-left: 8px; background: #555; border-radius: 4px; overflow: hidden; }
.shade .w-ico { width: 20.750px; }
.toolhdr { height: 28px; flex: none; background: linear-gradient(#4a4a4a, #686868); display: flex; align-items: center; padding-left: 16px; position: relative; }
.th-cur { display: flex; }
.th-sel { display: flex; margin-left: 14px; background: #3c3c3c; border-radius: 4px; overflow: hidden; }
.th-sel > span { width: 20.600px; height: 21px; display: flex; align-items: center; justify-content: center; }
.th-sel > .on { background: #4772b3; }
.th-opt { position: absolute; left: 1336px; top: 5px; width: 68px; height: 21px; background: #2a2a2a; border-radius: 4px; display: flex; align-items: center; justify-content: space-between; padding: 0 4px 0 9px; color: #d2d2d2; }
.vp-body { flex: 1; position: relative; background: linear-gradient(#b9bcc5, #b6b9c2 6%, #b3b6bf); }
.vp-text { margin: 0; position: absolute; left: 10px; top: 9px; line-height: 20px; color: #eef0f2; text-shadow: 0 0 2px #8a8c92; }
.vp-nav { position: absolute; left: 1372px; top: 0; padding-top: 100px; display: flex; flex-direction: column; gap: 3px; z-index: 3; }
.vp-nav > span { width: 30px; height: 30px; border-radius: 50%; background: #7c7e84; display: flex; align-items: center; justify-content: center; }
.vp-tab { position: absolute; top: 18px; width: 7px; height: 14px; background: #a3a5ad; }
.vp-tab-l { left: 0; } .vp-tab-r { right: 0; }
.vp-scene { position: absolute; left: 0; top: 0; width: 1411px; height: 647px; pointer-events: none; z-index: 2; }
.giz { font: 700 12px "DejaVu Sans", sans-serif; text-anchor: middle; fill: #1a1a1a; opacity: .6; }

/* node editor */
.nodeeditor { height: 392px; position: relative; overflow: hidden; background-color: #1b1b1b; border-radius: 6px 6px 0 0;
  background-image: radial-gradient(circle, #292929 1px, transparent 1.500px); background-size: 59px 60px; background-position: 0 10px; }
.nhdr { background: transparent; height: 28px; margin-top: 1px; }
.nhdr .w { background: #222; box-shadow: inset 0 0 0 1px #2b2b2b; }
.nhdr .w.blue { background: #4772b3; box-shadow: none; }
.nhdr .w.grey { background: #545454; box-shadow: none; }
.w-ed2 { width: 34px; padding-left: 4px; }
.w-objm { width: 97px; margin-left: 7px; padding: 0 2px; }
.m2 { margin-left: 14px; width: 178px; }
.chk { width: 14px; height: 14px; background: #4772b3; border-radius: 3px; display: flex; align-items: center; justify-content: center; }
.chk-lab { margin-left: 4px; width: 60px; white-space: nowrap; }
.w-slot { width: 86px; margin-left: 100px; padding: 0 3px 0 8px; }
.w-mic { width: 34px; margin-left: 9px; padding-left: 3px; border-radius: 4px 0 0 4px; }
.w-mname { width: 130px; height: 20px; background: #1d1d1d; padding: 2px 7px; color: #c8c8c8; font-size: 11.400px; }
.w-act { width: 22px; height: 20px; background: #4e4e4e; display: flex; align-items: center; justify-content: center; }
.w-actx { border-radius: 0 4px 4px 0; }
.nh-pin { margin-left: 5px; opacity: .7; }
.nh-right { left: 1267px; }
.nh-up { width: 31px; }
.w-snap2 { width: 44px; padding-left: 4px; }
.crumb { display: flex; align-items: center; height: 20px; margin-top: 13px; font-size: 11.200px; }
.c-first { margin-left: -2px; transform: rotate(-90deg); margin-right: 11px; }
.c-txt { margin-left: 10px; }
.c-sep { transform: rotate(-90deg); margin: 0 8px 0 14px; }
.wire-svg { position: absolute; left: 0; top: 0; width: 1411px; height: 392px; }
.node { position: absolute; background: #3c3c3c; color: #bbb; font-size: 6px; line-height: 8px; }
.bsdf { left: 726px; top: 65px; width: 138px; height: 326px; border-radius: 3px 3px 0 0; background: #343434; }
.n-title { height: 12px; background: #2e7a31; padding: 2px 0 0 14px; color: #d5e6d5; border-radius: 3px 3px 0 0; }
.n-title.red { background: #4c1f2f; height: 10px; padding-top: 1px; color: #d8c7cc; border-radius: 2px; margin: 1px 2px; }
.n-out { height: 16px; line-height: 16px; text-align: right; padding-right: 6px; position: relative; }
.n-dd { height: 10.500px; background: #262626; border-radius: 2px; padding: 1px 4px; }
.bsdf .n-dd { margin: 4.500px 5px 0; }
.bsdf .n-dd + .nr { margin-top: 1.200px; }
.nr { height: 12.750px; position: relative; padding: 1px 5px; display: flex; align-items: center; }
.n-cl { flex: none; width: 54px; }
.sw { flex: 1; height: 10px; background: #e9e9e9; border-radius: 1px; }
.sw.blk { background: #000; }
.nf { flex: 1; height: 10.500px; background: #545454; border-radius: 2px; display: flex; justify-content: space-between; padding: 1px 7px 0 8px; position: relative; overflow: hidden; }
.nf.dark { background: #262626; padding-left: 4px; }
.nf u, .num u { position: absolute; left: 0; top: 0; bottom: 0; background: #4772b3; }
.nf span, .num span { position: relative; }
.sk { position: absolute; left: -2px; top: 4px; width: 5px; height: 5px; border-radius: 50%; background: #a1a1a1; }
.sk.y { background: #c7c729; } .sk.p { background: #6363c7; } .sk.g { background: #63c7a0; }
.sk.out { left: auto; right: -3px; top: 6px; }
.output { left: 1043px; top: 72px; width: 82px; height: 71px; border: 2px solid #f2f2f2; border-radius: 4px; background: #2e2e2e; }
.o-dd { margin: 3px 6px 2px; }
.o-s { height: 13px; line-height: 13px; position: relative; padding-left: 5px; }
.o-s .sk { left: -4px; top: 4px; }
.ne-hs { position: absolute; left: 8px; right: 8px; top: 386px; height: 3px; background: #343434; }
.ne-vs { position: absolute; left: 1405px; top: 48px; width: 3px; height: 275px; background: #2e2e2e; }
.ne-arrow { position: absolute; left: 1403px; top: 46px; transform: rotate(90deg); }

/* outliner */
.outliner { height: 182px; margin-left: 1px; background: #282828; position: relative; border-radius: 5px 0 0 5px; overflow: hidden; }
.ol-head { display: flex; height: 30px; padding: 4px 0 0 10px; }
.ol-head .w-ed { background: #242424; }
.ol-head .w-ed + .w-ed { margin-left: 7px; }
.search { display: flex; align-items: center; height: 20px; background: #1f1f1f; border-radius: 4px; padding-left: 3px; }
.ol-search { width: 120px; margin-left: 25px; }
.ol-row { height: 22px; display: flex; align-items: center; color: #c8c8c8; position: relative; }
.l0 { padding-left: 26px; }
.l0 span { margin-left: 7px; }
.l1 { padding-left: 28px; }
.l2 { padding-left: 51px; }
.tri { width: 0; height: 0; border-left: 6px solid #aaa; border-top: 4px solid transparent; border-bottom: 4px solid transparent; flex: none; margin-right: 10px; }
.tri.down { border-top: 6px solid #aaa; border-left: 4px solid transparent; border-right: 4px solid transparent; border-bottom: 0; margin-right: 7px; }
.ol-hl { width: 21px; height: 21px; background: #4a4a4a; border-radius: 5px; display: flex; align-items: center; justify-content: center; margin-right: 6px; }
.off { color: #777; }
.off .tri { border-left-color: #666; }
.off .c-cam { color: #8a6243; margin: 0 5px 0 4px; }
.ol-x { margin-left: 22px; width: 21px; height: 21px; background: #4c6a5c; border-radius: 5px; display: flex; align-items: center; justify-content: center; }
.ol-x .ic { color: #5e8573; }
.sel { background: #334d80; color: #fff; }
.sel .tri { border-left-color: #c7d3ee; margin-right: 9px; }
.ol-hl2 { width: 20px; height: 20px; background: #6c7a98; border-radius: 4px; display: flex; align-items: center; justify-content: center; margin-right: 6px; }
.sel-txt { color: #e9c57e; }
.c-mesh { color: #35d4d4; margin-left: 25px; }
.c-bulb { color: #d9803a; margin: 0 8px 0 2px; }
.c-sun { color: #35c98a; margin-left: 22px; }
.l0 .ic, .l1 .ic { color: #e6e6e6; }
.ol-line { position: absolute; left: 33px; top: 78px; width: 1px; height: 54px; background: #4a4a4a; }

/* properties */
.props { height: 855px; background: #262626; border-radius: 5px 0 0 0; overflow: hidden; display: flex; flex-direction: column; }
.pr-head { height: 25px; flex: none; display: flex; align-items: flex-start; padding: 2px 0 0 11px; background: #2c2c2c; }
.w-ed3 { width: 31px; height: 23px; background: #222; padding-left: 2px; }
.pr-search { width: 119px; margin-left: 81px; }
.pr-main { flex: 1; display: grid; grid-template-columns: 32px 1fr; min-height: 0; }
.pr-tabs { background: #1c1c1c; padding-top: 8px; display: flex; flex-direction: column; }
.tab { height: 30.600px; flex: none; display: flex; align-items: center; padding-left: 10px; }
.tab.sep { margin-top: 9px; }
.tab.act { background: #2f2f2f; margin-left: 2px; padding-left: 8px; border-radius: 4px 0 0 4px; }
.pr-body { background: #2a2a2a; padding-left: 10px; overflow: hidden; min-width: 0; font-size: 11.600px; }
.pr-crumb { height: 20px; margin-top: 10px; display: flex; align-items: center; padding-left: 2px; color: #c8c8c8; font-size: 11.300px; }
.pc-a { margin-left: 10px; width: 30px; }
.pc-sep { transform: rotate(-90deg); margin: 0 8px 0 15px; }
.pc-b { margin-left: 10px; }
.slotbox { margin-top: 21px; height: 84px; background: #232323; border-radius: 4px; padding: 4px 0 0 5px; }
.slot-item { height: 20px; background: linear-gradient(90deg, #4a4a4a, #555 50%); border-radius: 4px 0 0 4px; display: flex; align-items: center; padding-left: 5px; color: #d2d2d2; }
.ball { width: 12px; height: 14px; border-radius: 50%; background: radial-gradient(circle at 40% 40%, #eee, #9a9a9a); margin-right: 11px; }
.slot-foot { margin-top: 42px; display: flex; align-items: center; padding-left: 8px; color: #999; }
.tri.small { margin-right: 0; }
.dots { margin-left: 127px; font-size: 9px; }
.matsel { margin-top: 7px; height: 20px; display: flex; }
.ms-ic { flex: none; width: 33px; background: #2e2e2e; border-radius: 4px 0 0 4px; display: flex; align-items: center; padding-left: 3px; }
.ms-name { flex: none; width: 170px; background: #1d1d1d; padding: 2px 10px; color: #c8c8c8; }
.ms-sh { flex: none; width: 24px; background: #555; display: flex; align-items: center; justify-content: center; }
.pn { display: flex; align-items: center; gap: 4px; color: #bdbdbd; font-size: 11.200px; }
.pn .ic { color: #aaa; }
.pn-prev { height: 27px; margin-top: 13px; background: #333; border-radius: 4px 0 0 4px; padding-left: 7px; }
.pn-r { transform: rotate(-90deg); }
.pn-surface { margin-top: 3px; background: #333; border-radius: 4px 0 0 0; padding-bottom: 40px; }
.pn-h { height: 26px; padding-left: 7px; }
.usenodes { margin: 10px 0 0 9px; height: 20px; background: #4772b3; border-radius: 4px 0 0 4px; display: flex; align-items: center; color: #e6e6e6; padding-left: 3px; position: relative; font-size: 11px; }
.usenodes span { position: absolute; left: 127px; }
.prow { display: grid; grid-template-columns: 113px 31px 1fr; height: 27.300px; align-items: center; }
.prow label { text-align: right; white-space: nowrap; color: #c4c4c4; grid-column: 1; line-height: 20px; font-size: 10.900px; }
.prow.first { margin-top: 16px; height: 27.400px; }
.prow.gap { margin-top: 11.300px; }
.dd.wide { grid-column: 2 / 4; margin-left: 11px; height: 20px; background: #262626; border-radius: 4px 0 0 4px; padding: 2px 7px; display: flex; align-items: center; gap: 7px; color: #c8c8c8; white-space: nowrap; overflow: hidden; font-size: 11px; }
.sock { margin-left: 11px; width: 20px; height: 20px; background: #282828; border-radius: 4px 0 0 4px; display: flex; align-items: center; justify-content: center; }
.dot { display: block; width: 7px; height: 7px; border-radius: 50%; background: #a1a1a1; flex: none; }
.dot.g { background: #63c763; } .dot.y { background: #c7c729; } .dot.p { background: #6363c7; }
.swatch { height: 20px; background: #e8e8e8; }
.num { display: flex; height: 20px; background: #545454; justify-content: flex-end; align-items: center; padding-right: 4px; position: relative; color: #cfcfcf; overflow: hidden; }
.prow.tri3 { height: 71.100px; align-items: start; padding-top: 3.700px; }
.stack { display: flex; flex-direction: column; gap: 1.500px; margin-left: 8px; }
.stack .num { padding-right: 0; }

/* status */
.status { display: flex; align-items: center; background: #1c1c1c; color: #a8a8a8; height: 20px; padding-top: 1px; }
.st-a { width: 153px; white-space: nowrap; }
.st-i { color: #a8a8a8; margin-right: 9px; }
.st-b { width: 207px; }
```
